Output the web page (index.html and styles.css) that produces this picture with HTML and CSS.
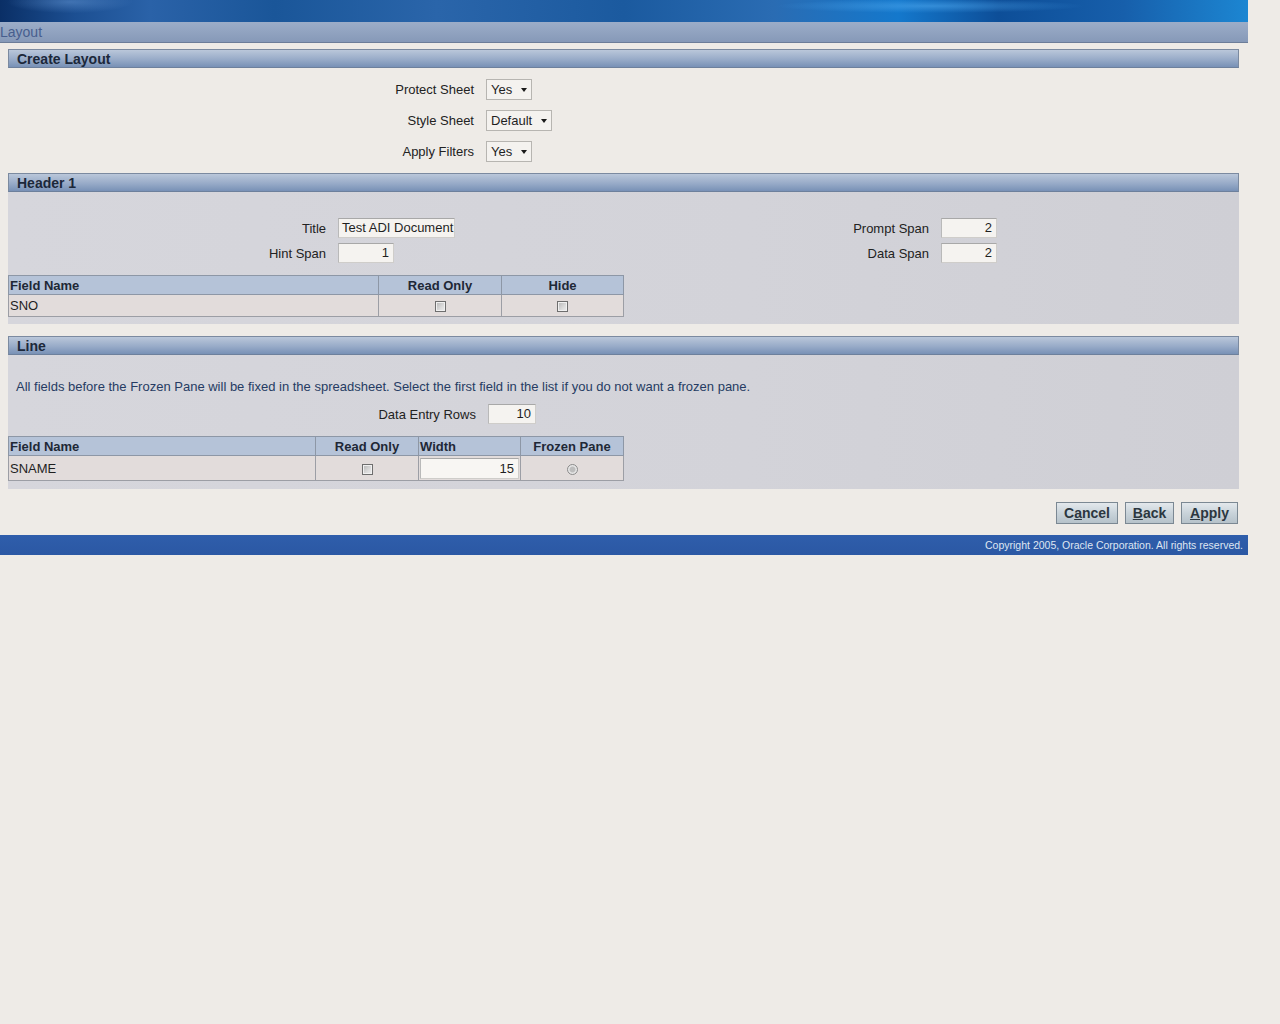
FILE: index.html
```html
<!DOCTYPE html>
<html>
<head>
<meta charset="utf-8">
<title>Layout</title>
<link rel="stylesheet" href="styles.css">
</head>
<body>
<div class="page">
  <div class="banner"></div>
  <div class="crumb">Layout</div>

  <div class="section section-create">
    <div class="sec-head">Create Layout</div>
    <div class="form-create">
      <div class="lbl">Protect Sheet</div>
      <div class="sel sel-yes"><span>Yes</span><i class="arrow"></i></div>
      <div class="lbl">Style Sheet</div>
      <div class="sel sel-def"><span>Default</span><i class="arrow"></i></div>
      <div class="lbl">Apply Filters</div>
      <div class="sel sel-yes"><span>Yes</span><i class="arrow"></i></div>
    </div>
  </div>

  <div class="section">
    <div class="sec-head">Header 1</div>
    <div class="panel panel-h1">
      <div class="form-h1">
        <div class="lbl">Title</div>
        <div class="inp inp-title">Test ADI Document</div>
        <div class="lbl">Prompt Span</div>
        <div class="inp inp-num">2</div>
        <div class="lbl">Hint Span</div>
        <div class="inp inp-num inp-hint">1</div>
        <div class="lbl">Data Span</div>
        <div class="inp inp-num">2</div>
      </div>
      <table class="grid grid-h1">
        <thead>
          <tr><th class="c-name">Field Name</th><th class="c-ro">Read Only</th><th class="c-hide">Hide</th></tr>
        </thead>
        <tbody>
          <tr><td class="c-name">SNO</td><td class="ctr"><span class="chk"></span></td><td class="ctr"><span class="chk"></span></td></tr>
        </tbody>
      </table>
    </div>
  </div>

  <div class="section">
    <div class="sec-head">Line</div>
    <div class="panel panel-line">
      <p class="note">All fields before the Frozen Pane will be fixed in the spreadsheet. Select the first field in the list if you do not want a frozen pane.</p>
      <div class="form-line">
        <div class="lbl">Data Entry Rows</div>
        <div class="inp inp-num inp-rows">10</div>
      </div>
      <table class="grid grid-line">
        <thead>
          <tr><th class="c-name">Field Name</th><th class="c-ro2">Read Only</th><th class="c-w">Width</th><th class="c-fp">Frozen Pane</th></tr>
        </thead>
        <tbody>
          <tr><td class="c-name">SNAME</td><td class="ctr"><span class="chk"></span></td><td class="c-winp"><div class="inp inp-num inp-width">15</div></td><td class="ctr"><span class="radio"></span></td></tr>
        </tbody>
      </table>
    </div>
  </div>

  <div class="buttons">
    <button class="btn btn-cancel">C<u>a</u>ncel</button>
    <button class="btn btn-back"><u>B</u>ack</button>
    <button class="btn btn-apply"><u>A</u>pply</button>
  </div>

  <div class="footer">Copyright 2005, Oracle Corporation. All rights reserved.</div>
</div>
</body>
</html>
```

FILE: styles.css
```css
html, body {
  margin: 0;
  padding: 0;
  background: #eeebe7;
}
body {
  font-family: "Liberation Sans", Arial, sans-serif;
  font-size: 13px;
  color: #222;
}
.page {
  width: 1248px;
}
.banner {
  height: 22px;
  background:
    radial-gradient(ellipse 90px 16px at 70px 2px, rgba(110,160,220,0.45), rgba(0,0,0,0) 70%),
    radial-gradient(ellipse 220px 10px at 930px 6px, rgba(80,170,240,0.55), rgba(0,0,0,0) 70%),
    linear-gradient(90deg, #0a2f66 0%, #1c4f92 6%, #2a62a8 12%, #1a5699 22%, #2a65aa 35%, #1b5a9f 50%, #2a6cb3 62%, #1478cc 72%, #0d4e98 80%, #175fab 90%, #1c86d2 100%);
}
.crumb {
  height: 20px;
  line-height: 21px;
  background: linear-gradient(#9cadc8, #8699b8);
  border-bottom: 1px solid #6c7d99;
  color: #475e8e;
  font-size: 14px;
}
.section {
  margin: 0 9px 0 8px;
}
.crumb + .section { margin-top: 6px; }
.section + .section { margin-top: 12px; }
.section-create { margin-bottom: -1px; }
.sec-head {
  height: 17px;
  line-height: 18px;
  border: 1px solid #7b8aa0;
  border-bottom-color: #6d809c;
  background: linear-gradient(#bac7da, #98abc8 55%, #7891b6);
  color: #1c283a;
  font-weight: bold;
  font-size: 14px;
  padding-left: 8px;
}
.lbl {
  text-align: right;
  color: #222;
}
.form-create {
  display: grid;
  grid-template-columns: 466px auto;
  column-gap: 12px;
  row-gap: 10px;
  align-items: center;
  justify-items: start;
  padding: 11px 0 0;
}
.form-create .lbl { justify-self: stretch; }
.sel {
  height: 19px;
  border: 1px solid #b7b5b1;
  background: #f4f2ef;
  display: flex;
  align-items: center;
  padding: 0 4px;
  color: #1f1f1f;
}
.sel-yes { width: 36px; }
.sel-def { width: 56px; }
.sel span { flex: 1; }
.arrow {
  width: 0; height: 0;
  border-left: 3.5px solid transparent;
  border-right: 3.5px solid transparent;
  border-top: 4px solid #1a1a1a;
}
.panel {
  background: linear-gradient(90deg, #d6d6dc, #d3d3d9 60%, #cfcfd5);
}
.panel-h1 {
  padding: 26px 0 7px;
}
.form-h1 {
  display: grid;
  grid-template-columns: 318px 117px 462px 56px;
  column-gap: 12px;
  row-gap: 5px;
  align-items: center;
  margin-bottom: 12px;
}
.inp {
  height: 18px;
  line-height: 18px;
  border: 1px solid #cfcdca;
  border-top-color: #a8a8a8;
  border-left-color: #b9b9b9;
  background: #f5f3f0;
  padding: 0 3px;
  color: #1f1f1f;
  white-space: nowrap;
  overflow: hidden;
}
.inp-num { text-align: right; padding-right: 4px; }
.inp-hint { width: 47px; }
.grid {
  border-collapse: collapse;
  width: 616px;
  table-layout: fixed;
}
.grid th {
  background: #b5c3d8;
  color: #1e2836;
  font-weight: bold;
  font-size: 13px;
  height: 18px;
  padding: 0 1px;
  border: 1px solid #8d97a6;
  text-align: center;
}
.grid th.c-name, .grid th.c-w { text-align: left; }
.grid td {
  background: #e2dcdb;
  border: 1px solid #9c9ea5;
  padding: 0 1px;
  color: #1f1f1f;
  font-size: 13px;
}
.grid-h1 td { height: 21px; }
.grid-h1 .c-name { width: 367px; }
.grid-h1 .c-ro { width: 120px; }
.ctr { text-align: center; }
.chk {
  display: inline-block;
  box-sizing: border-box;
  width: 11px;
  height: 11px;
  border: 1px solid #6e6e6e;
  background: linear-gradient(135deg, #b4b4b4, #dcdcdc 60%, #ededed);
  box-shadow: inset 0 0 0 1px #f0f0f0;
  vertical-align: middle;
}
.radio {
  display: inline-block;
  box-sizing: border-box;
  width: 11px;
  height: 11px;
  border: 1px solid #8a8a8a;
  border-radius: 50%;
  background: radial-gradient(circle at 50% 50%, #bdbdbd 0 2.5px, #e6e6e6 3.5px);
  vertical-align: middle;
}
.panel-line {
  padding: 24px 0 8px;
}
.note {
  margin: 0 0 9px 8px;
  color: #263c63;
  font-size: 13px;
  line-height: 16px;
}
.form-line {
  display: grid;
  grid-template-columns: 468px 48px;
  column-gap: 12px;
  align-items: center;
  margin-bottom: 12px;
}
.grid-line td { height: 24px; }
.grid-line .c-name { width: 304px; }
.grid-line .c-ro2 { width: 100px; }
.grid-line .c-w { width: 99px; }
.inp-width {
  height: 19px;
  line-height: 19px;
  background: #f8f6f3;
}
.buttons {
  display: flex;
  justify-content: flex-end;
  gap: 7px;
  margin: 13px 10px 0 0;
}
.btn {
  height: 22px;
  padding: 0;
  border: 1px solid #7b8893;
  background: linear-gradient(#e3e8ec, #c9d3da 50%, #b6c2ca);
  color: #2c3740;
  font-family: "Liberation Sans", Arial, sans-serif;
  font-weight: bold;
  font-size: 14px;
  line-height: 20px;
}
.btn-cancel { width: 62px; }
.btn-back { width: 49px; }
.btn-apply { width: 57px; }
.footer {
  margin-top: 11px;
  height: 20px;
  line-height: 21px;
  background: linear-gradient(#2f5eab, #2b58a4);
  color: #dfe6f2;
  font-size: 10.5px;
  text-align: right;
  padding-right: 5px;
}
```
